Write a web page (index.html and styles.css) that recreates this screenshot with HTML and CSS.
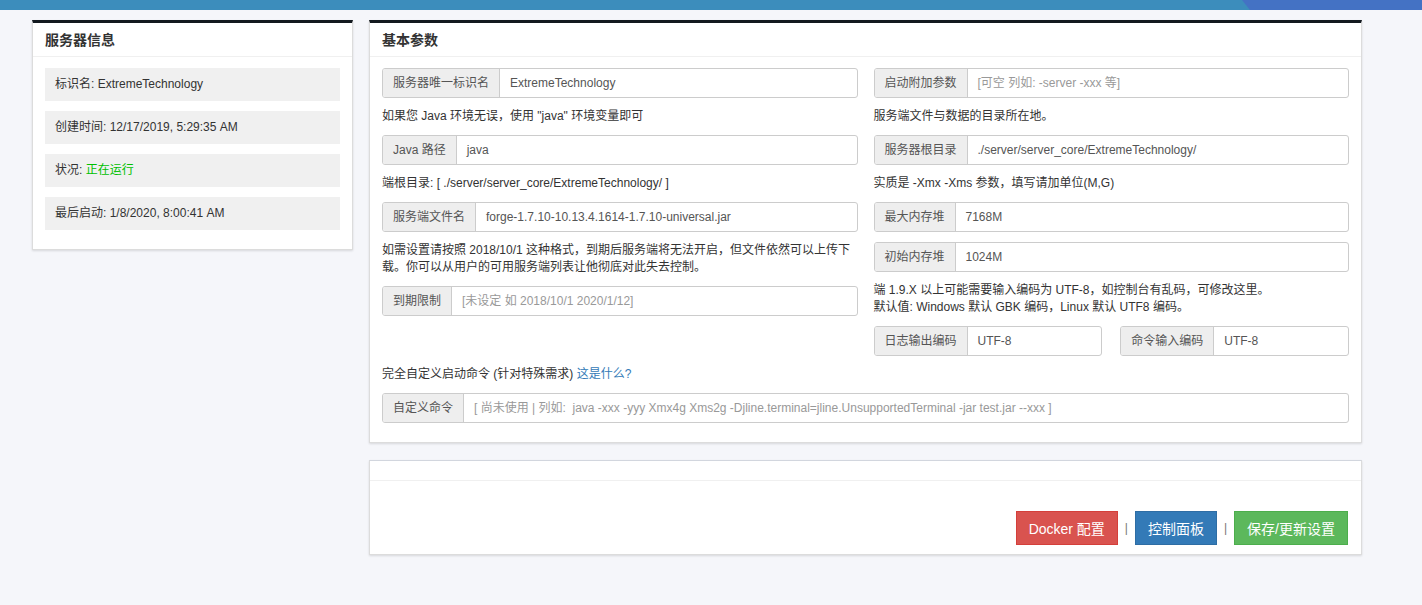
FILE: index.html
```html
<!DOCTYPE html>
<html lang="zh-CN">
<head>
<meta charset="utf-8">
<title>服务器配置</title>
<link rel="stylesheet" href="styles.css">
</head>
<body>
<div class="topbar"><div class="topbar-right"></div></div>
<div class="page">
  <aside class="card side">
    <div class="card-head">服务器信息</div>
    <div class="card-body">
      <div class="info">标识名: ExtremeTechnology</div>
      <div class="info">创建时间: 12/17/2019, 5:29:35 AM</div>
      <div class="info">状况: <span class="ok">正在运行</span></div>
      <div class="info">最后启动: 1/8/2020, 8:00:41 AM</div>
    </div>
  </aside>
  <main class="main">
    <section class="card">
      <div class="card-head">基本参数</div>
      <div class="card-body">
        <div class="cols">
          <div class="col">
            <div class="ig"><span class="addon">服务器唯一标识名</span><span class="field">ExtremeTechnology</span></div>
            <p class="help">如果您 Java 环境无误，使用 "java" 环境变量即可</p>
            <div class="ig"><span class="addon">Java 路径</span><span class="field">java</span></div>
            <p class="help">端根目录: [ ./server/server_core/ExtremeTechnology/ ]</p>
            <div class="ig"><span class="addon">服务端文件名</span><span class="field">forge-1.7.10-10.13.4.1614-1.7.10-universal.jar</span></div>
            <p class="help">如需设置请按照 2018/10/1 这种格式，到期后服务端将无法开启，但文件依然可以上传下载。你可以从用户的可用服务端列表让他彻底对此失去控制。</p>
            <div class="ig"><span class="addon">到期限制</span><span class="field ph">[未设定 如 2018/10/1 2020/1/12]</span></div>
          </div>
          <div class="col">
            <div class="ig"><span class="addon">启动附加参数</span><span class="field ph">[可空 列如: -server -xxx 等]</span></div>
            <p class="help">服务端文件与数据的目录所在地。</p>
            <div class="ig"><span class="addon">服务器根目录</span><span class="field">./server/server_core/ExtremeTechnology/</span></div>
            <p class="help">实质是 -Xmx -Xms 参数，填写请加单位(M,G)</p>
            <div class="ig"><span class="addon">最大内存堆</span><span class="field">7168M</span></div>
            <div class="ig"><span class="addon">初始内存堆</span><span class="field">1024M</span></div>
            <p class="help">端 1.9.X 以上可能需要输入编码为 UTF-8，如控制台有乱码，可修改这里。<br>默认值: Windows 默认 GBK 编码，Linux 默认 UTF8 编码。</p>
            <div class="pair">
              <div class="ig"><span class="addon">日志输出编码</span><span class="field">UTF-8</span></div>
              <div class="ig"><span class="addon">命令输入编码</span><span class="field">UTF-8</span></div>
            </div>
          </div>
        </div>
        <p class="help">完全自定义启动命令 (针对特殊需求) <a class="link" href="#">这是什么?</a></p>
        <div class="ig"><span class="addon">自定义命令</span><span class="field ph">[ 尚未使用 | 列如:&nbsp; java -xxx -yyy Xmx4g Xms2g -Djline.terminal=jline.UnsupportedTerminal -jar test.jar --xxx ]</span></div>
      </div>
    </section>
    <section class="card actions">
      <div class="actions-head"></div>
      <div class="actions-body">
        <button class="btn red">Docker 配置</button>
        <span class="sep">|</span>
        <button class="btn blue">控制面板</button>
        <span class="sep">|</span>
        <button class="btn green">保存/更新设置</button>
      </div>
    </section>
  </main>
</div>
</body>
</html>
```

FILE: styles.css
```css
* { box-sizing: border-box; }
html, body { margin: 0; padding: 0; }
body {
  background: #f5f6fa;
  font-family: "Liberation Sans", "Noto Sans CJK SC", sans-serif;
  font-size: 12px;
  color: #333;
  min-height: 605px;
}
.topbar {
  height: 10px;
  background: #3c8dbc;
  position: relative;
  overflow: hidden;
}
.topbar-right {
  position: absolute;
  top: 0;
  right: 0;
  width: 180px;
  height: 10px;
  background: #4472c4;
  clip-path: polygon(0 0, 100% 0, 100% 100%, 8px 100%);
}
.page {
  display: flex;
  align-items: flex-start;
  gap: 16px;
  padding: 10px 60px 0 32px;
}
.card {
  background: #fff;
  border: 1px solid #dcdcdc;
  border-top: 3px solid #13191f;
  box-shadow: 0 1px 2px rgba(0,0,0,0.12);
}
.side { width: 321px; flex: none; }
.main { flex: 1; display: flex; flex-direction: column; gap: 17px; }
.card-head {
  height: 34px;
  line-height: 34px;
  padding-left: 12px;
  font-size: 14px;
  font-weight: bold;
  color: #333;
  border-bottom: 1px solid #f0f0f0;
}
.card-body { padding: 11px 12px 9px 12px; }
.info {
  background: #f0f0f0;
  height: 33px;
  line-height: 33px;
  padding-left: 10px;
  margin-bottom: 10px;
  color: #333;
}
.ok { color: #00c000; }
.cols {
  display: grid;
  grid-template-columns: 1fr 1fr;
  column-gap: 16px;
}
.ig {
  display: flex;
  height: 30px;
  border: 1px solid #ccc;
  border-radius: 3px;
  margin-bottom: 10px;
  overflow: hidden;
  background: #fff;
}
.addon {
  flex: none;
  background: #eee;
  border-right: 1px solid #ccc;
  padding: 0 10px;
  line-height: 28px;
  color: #555;
  white-space: nowrap;
}
.field {
  flex: 1;
  padding: 0 10px;
  line-height: 28px;
  color: #555;
  white-space: nowrap;
  overflow: hidden;
}
.field.ph { color: #999; }
.help {
  margin: 0 0 10px 0;
  line-height: 17px;
  color: #333;
}
.pair {
  display: grid;
  grid-template-columns: 1fr 1fr;
  column-gap: 18px;
}
.link { color: #337ab7; text-decoration: none; }
.actions { border-top: 1px solid #d2d6de; }
.actions-head { height: 20px; border-bottom: 1px solid #f0f0f0; }
.actions-body {
  display: flex;
  justify-content: flex-end;
  align-items: center;
  gap: 7px;
  padding: 30px 13px 9px 0;
}
.btn {
  height: 34px;
  padding: 0 12px;
  font-family: inherit;
  font-size: 14px;
  color: #fff;
  border: 1px solid transparent;
  border-radius: 0;
  cursor: pointer;
}
.red { background: #d9534f; border-color: #d43f3a; }
.blue { background: #337ab7; border-color: #2e6da4; }
.green { background: #5cb85c; border-color: #4cae4c; }
.sep { color: #777; font-size: 12px; }
```
